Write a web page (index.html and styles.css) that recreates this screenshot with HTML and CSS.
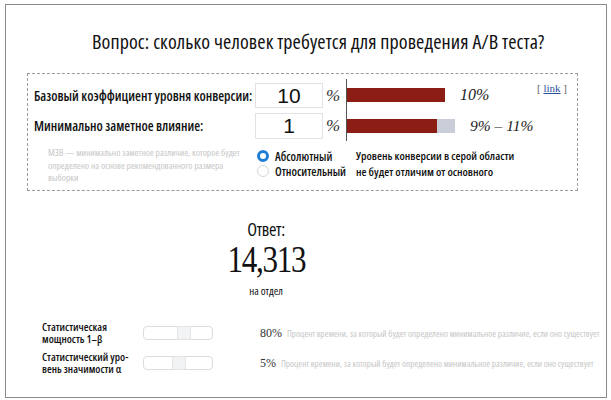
FILE: index.html
```html
<!DOCTYPE html>
<html lang="ru">
<head>
<meta charset="utf-8">
<link rel="stylesheet" href="styles.css">
</head>
<body>
<div class="frame">
  <h1 class="title">Вопрос: сколько человек требуется для проведения A/B теста?</h1>
  <div class="box">
    <div class="lbl">Базовый коэффициент уровня конверсии:</div>
    <div class="inp">10</div>
    <div class="pct">%</div>
    <div class="bars">
      <div class="barrow first">
        <span class="bar red" style="width:98px"></span>
        <span class="val">10%</span>
        <span class="link">[ <a href="#">link</a> ]</span>
      </div>
      <div class="barrow second">
        <span class="bar red" style="width:90px"></span><span class="bar gray" style="width:18px"></span>
        <span class="val val2">9% – 11%</span>
      </div>
    </div>
    <div class="lbl">Минимально заметное влияние:</div>
    <div class="inp">1</div>
    <div class="pct">%</div>
    <div class="note">МЗВ — минимально заметное различие, которое будет<br>определено на основе рекомендованного размера<br>выборки</div>
    <div class="radios">
      <div class="radio"><span class="dot on"></span>Абсолютный</div>
      <div class="radio"><span class="dot"></span>Относительный</div>
    </div>
    <div class="caption">Уровень конверсии в серой области<br>не будет отличим от основного</div>
  </div>

  <div class="answer">
    <div class="ans-label">Ответ:</div>
    <div class="ans-num"><span>14,313</span></div>
    <div class="ans-unit">на отдел</div>
  </div>

  <div class="params">
    <div class="param">
      <div class="plabel"><div>Статистическая</div><div>мощность 1–β</div></div>
      <div class="slider"><span class="thumb t1"></span></div>
      <div class="pval">80%</div>
      <div class="pnote">Процент времени, за который будет определено минимальное различие, если оно существует</div>
    </div>
    <div class="param">
      <div class="plabel"><div>Статистический уро-</div><div>вень значимости α</div></div>
      <div class="slider"><span class="thumb t2"></span></div>
      <div class="pval">5%</div>
      <div class="pnote">Процент времени, за который будет определено минимальное различие, если оно существует</div>
    </div>
  </div>
</div>
</body>
</html>
```

FILE: styles.css
```css
* { box-sizing: border-box; }
html, body { margin: 0; padding: 0; background: #fff; }
body {
  font-family: "Open Sans", "Noto Sans", sans-serif;
  font-stretch: 87.5%;
  color: #111;
  width: 611px;
  height: 400px;
  overflow: hidden;
}
.frame {
  margin: 4px 0 0 5px;
  width: 602px;
  height: 394px;
  border: 1px solid #8a8a8a;
  padding-top: 25px;
}
.title {
  margin: 0 0 19px 0;
  padding-left: 86px;
  font-size: 20px;
  line-height: 24px;
  font-weight: 400;
  letter-spacing: 0.1px;
  color: #111;
  white-space: nowrap;
}
.box {
  margin-left: 21px;
  width: 551px;
  height: 118px;
  border: 1px dashed #9a9a9a;
  padding: 9px 6px 0 6px;
  display: grid;
  grid-template-columns: 218px 71px 23px 1fr;
  grid-template-rows: 25px 26px 1fr;
  row-gap: 5px;
}
.lbl {
  font-size: 13.5px;
  font-weight: 600;
  align-self: center;
  white-space: nowrap;
}
.inp {
  margin-left: 3px;
  width: 68px;
  border: 1px solid #e2e2e2;
  font-family: "Liberation Sans", Arial, sans-serif;
  font-size: 21px;
  display: flex;
  align-items: center;
  justify-content: center;
}
.pct {
  font-family: "Liberation Serif", serif;
  font-style: italic;
  font-size: 17px;
  color: #333;
  padding-left: 3px;
  align-self: center;
}
.bars {
  grid-column: 4;
  grid-row: 1 / 3;
  margin: -4px 0 -2px 0;
  border-left: 1px solid #555;
  padding-top: 9px;
  display: flex;
  flex-direction: column;
  gap: 17px;
}
.barrow {
  display: flex;
  align-items: center;
  height: 14px;
}
.bar { display: block; height: 14px; }
.bar.red { background: #8b1d14; }
.bar.gray { background: #c9cdd7; }
.val {
  font-family: "Liberation Serif", serif;
  font-style: italic;
  font-size: 16px;
  color: #222;
  margin-left: 15px;
}
.val2 { margin-left: 15px; font-size: 15.5px; }
.link {
  margin-left: auto;
  margin-right: 4px;
  align-self: flex-start;
  margin-top: -6px;
  font-family: "Liberation Serif", serif;
  font-size: 11px;
  color: #666;
}
.link a { color: #2c4f9e; text-decoration: underline; }
.note {
  grid-column: 1;
  padding: 3px 0 0 14px;
  font-size: 9.5px;
  line-height: 12.5px;
  color: #c6c6c6;
  white-space: nowrap;
}
.radios {
  grid-column: 2 / 4;
  padding: 6px 0 0 5px;
  display: flex;
  flex-direction: column;
  gap: 3px;
}
.radio {
  display: flex;
  align-items: center;
  font-size: 11.8px;
  font-weight: 600;
  white-space: nowrap;
  height: 12px;
}
.dot {
  flex: none;
  width: 12px;
  height: 12px;
  border-radius: 50%;
  border: 1px solid #d6d6d6;
  margin-right: 6px;
  background: #fff;
}
.dot.on {
  border: 3.5px solid #1f7fd6;
  background: #fff;
}
.caption {
  grid-column: 4;
  padding: 4px 0 0 10px;
  font-size: 11.5px;
  line-height: 16px;
  font-weight: 600;
  white-space: nowrap;
}
.answer {
  margin-top: 27px;
  padding-right: 80px;
  text-align: center;
}
.ans-label {
  font-size: 18px;
  line-height: 22px;
  letter-spacing: -0.3px;
}
.ans-num {
  font-family: "Liberation Serif", serif;
  font-size: 37px;
  line-height: 40px;
}
.ans-num span {
  display: inline-block;
  letter-spacing: -1.5px;
  transform: scaleX(0.84);
}
.ans-unit {
  margin-top: 3px;
  font-size: 11px;
}
.params {
  margin-top: 23px;
  padding-left: 36px;
  display: flex;
  flex-direction: column;
  gap: 6px;
}
.param {
  display: flex;
  align-items: center;
  height: 24px;
}
.plabel {
  flex: none;
  width: 101px;
  font-size: 11px;
  line-height: 12px;
  font-weight: 600;
  white-space: nowrap;
}
.slider {
  flex: none;
  position: relative;
  width: 70px;
  height: 14px;
  border: 1px solid #dcdcdc;
  border-radius: 4px;
  background: #fff;
}
.thumb {
  position: absolute;
  top: -1px;
  width: 14px;
  height: 14px;
  background: #f1f3f5;
  border: 1px solid #e4e4e4;
  border-radius: 2px;
}
.t1 { left: 33px; }
.t2 { left: 28px; }
.pval {
  margin-left: 47px;
  font-family: "Liberation Serif", serif;
  font-size: 12px;
  color: #333;
  white-space: nowrap;
}
.pnote {
  margin-left: 5px;
  font-size: 9.2px;
  color: #c6c6c6;
  white-space: nowrap;
}
```
